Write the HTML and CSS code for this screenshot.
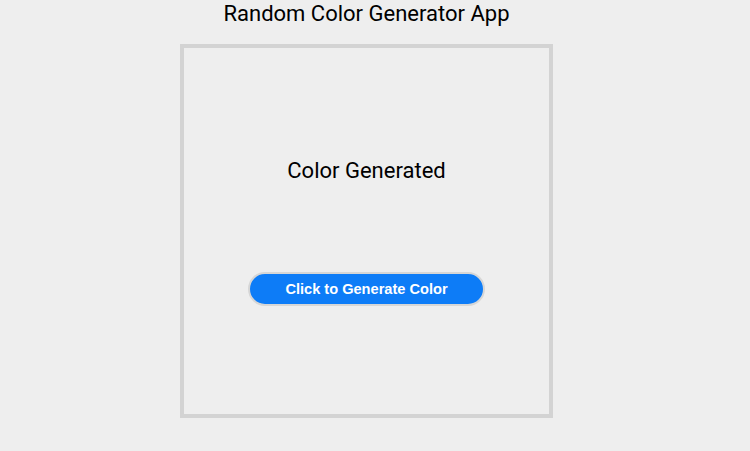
FILE: index.html
```html
<!doctype html>
<html lang="en">
  <head>
    <meta charset="UTF-8" />
    <meta name="viewport" content="width=device-width, initial-scale=1.0" />
    <title>Random Color Generator App</title>
    <link rel="stylesheet" href="styles.css">
  </head>
  <body>
    <header class="app-title">Random Color Generator App</header>

    <!-- Color box -->
    <main class="color-box">
      <h2 class="color-label">Color Generated</h2>
      <button class="generate-button">Click to Generate Color</button>
    </main>
  </body>
</html>
```

FILE: styles.css
```css
/* General Styling */
body {
  font-family: Roboto, "Noto Sans", sans-serif;
  margin: 0;
  padding: 0 17px 0 0;
  background-color: #eeeeee;
  display: flex;
  flex-direction: column;
  align-items: center;
}

.app-title {
  font-size: 22px;
  line-height: 28px;
  color: #000;
  margin-top: 0;
  margin-bottom: 16px;
}

/* Color Box */
.color-box {
  width: 365px;
  height: 366px;
  border: 4px solid #d3d3d3;
  display: flex;
  flex-direction: column;
  align-items: center;
  box-sizing: content-box;
}

.color-label {
  font-size: 22px;
  font-weight: normal;
  line-height: 28px;
  margin: 109px 0 0;
}

.generate-button {
  margin-top: 87px;
  width: 237px;
  height: 34px;
  border: 2px solid #d6d6d6;
  border-radius: 17px;
  background-color: #0d7cf7;
  color: #fff;
  font-family: "Liberation Sans", Arial, sans-serif;
  font-weight: bold;
  font-size: 14.6px;
  cursor: pointer;
}
```
